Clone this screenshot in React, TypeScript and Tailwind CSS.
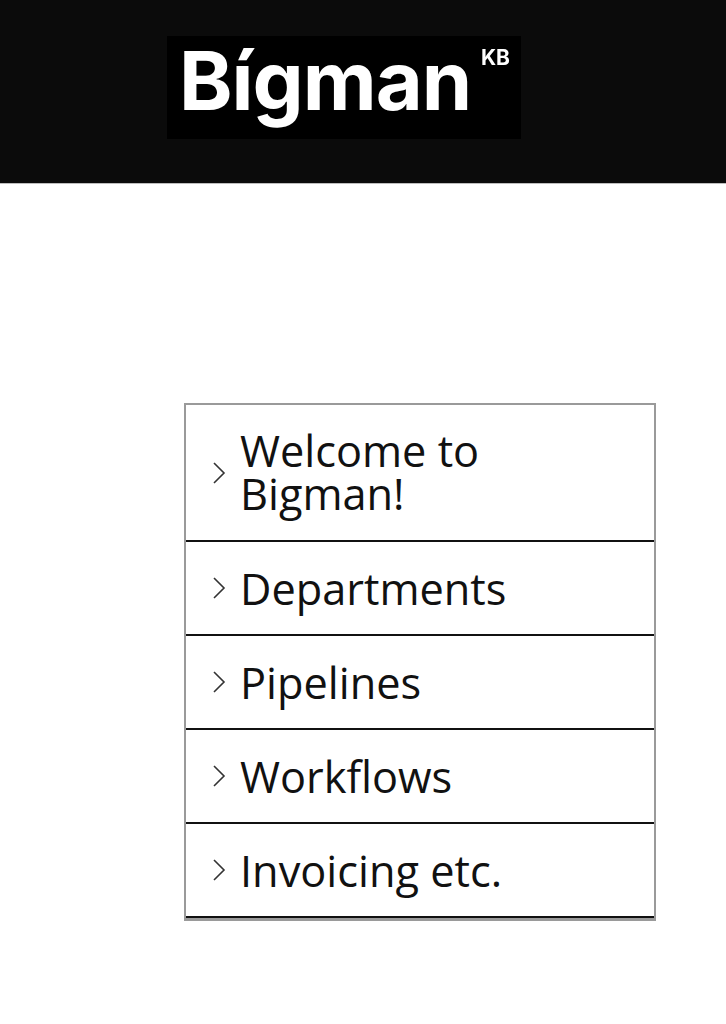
const items = ["Welcome to Bigman!", "Departments", "Pipelines", "Workflows", "Invoicing etc."];

const App = () => {
    return (
        <div className="min-h-[1024px] bg-white font-['Open_Sans',sans-serif]">
            {/* Header with logo */}
            <header className="h-[184px] bg-[#0b0b0b] border-b border-[#bdbdbd] pl-[167px] pt-[36px]">
                <div className="relative flex h-[103px] w-[354px] bg-black pl-[12px] pt-[5px] font-['Inter',sans-serif] text-white">
                    <span className="block text-[81px] leading-[80px] font-bold tracking-[-1px] blur-[0.6px]">Bígman</span>
                    <span className="absolute right-[11px] top-[9px] block text-[21px] leading-[26px] font-bold blur-[0.4px]">KB</span>
                </div>
            </header>

            {/* Menu */}
            <main className="pl-[184px] pt-[219px]">
                <ul className="w-[472px] border-2 border-b-[3px] border-[#9a9a9a]">
                    {items.map((item, idx) => (
                        <li
                            key={item}
                            className={`flex items-center border-b-2 border-[#111] pl-[26px] ${idx === 0 ? "h-[137px]" : "h-[94px]"}`}
                        >
                            <svg viewBox="0 0 14 24" className="w-[14px] h-[24px] shrink-0 text-[#333]" fill="none" stroke="currentColor" strokeWidth={1.6}>
                                <path d="M2 2 L12 12 L2 22" />
                            </svg>
                            <span className={`ml-[14px] w-[360px] text-[43.3px] leading-[43px] text-[#111] ${idx === 0 ? "-mt-[2px]" : "mt-0"}`}>{item}</span>
                        </li>
                    ))}
                </ul>
            </main>
        </div>
    );
};

export default App;
